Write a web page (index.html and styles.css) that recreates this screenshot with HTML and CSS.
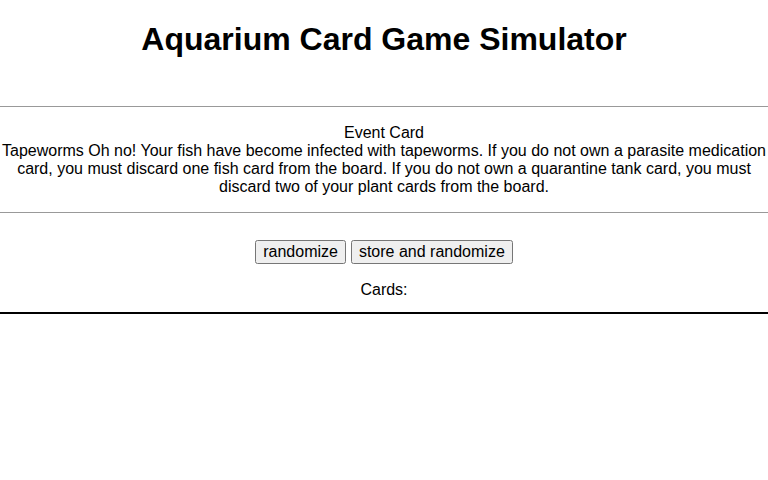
FILE: index.html
```html
<!DOCTYPE html>
<html>
<head>
<meta charset="utf-8">
<title>Aquarium Card Game Simulator</title>
<link rel="stylesheet" href="styles.css">
</head>
<body>
<h1 class="title">Aquarium Card Game Simulator</h1>
<hr class="rule">
<div class="event">
  <div class="event-label">Event Card</div>
  <div class="event-text">Tapeworms Oh no! Your fish have become infected with tapeworms. If you do not own a parasite medication card, you must discard one fish card from the board. If you do not own a quarantine tank card, you must discard two of your plant cards from the board.</div>
</div>
<hr class="rule">
<div class="controls">
  <button class="btn">randomize</button>
  <button class="btn">store and randomize</button>
</div>
<div class="cards-label">Cards:</div>
<div class="cards"></div>
</body>
</html>
```
FILE: styles.css
```css
body {
  margin: 0;
  font-family: "Liberation Sans", Arial, sans-serif;
  font-size: 16px;
  color: #000;
  background: #fff;
  text-align: center;
}
.title {
  font-size: 32px;
  font-weight: bold;
  margin: 21px 0 48px;
}
.rule {
  border: 0;
  border-top: 1px solid #999;
  margin: 0;
}
.event {
  padding: 17px 0 16px;
  line-height: 18px;
}
.controls {
  margin-top: 27px;
  display: flex;
  justify-content: center;
  gap: 5px;
}
.btn {
  font-family: "Liberation Sans", Arial, sans-serif;
  font-size: 16px;
  padding: 1px 6px;
}
.cards-label {
  margin-top: 17px;
  line-height: 18px;
}
.cards {
  margin-top: 13px;
  border-top: 2px solid #000;
}
```
